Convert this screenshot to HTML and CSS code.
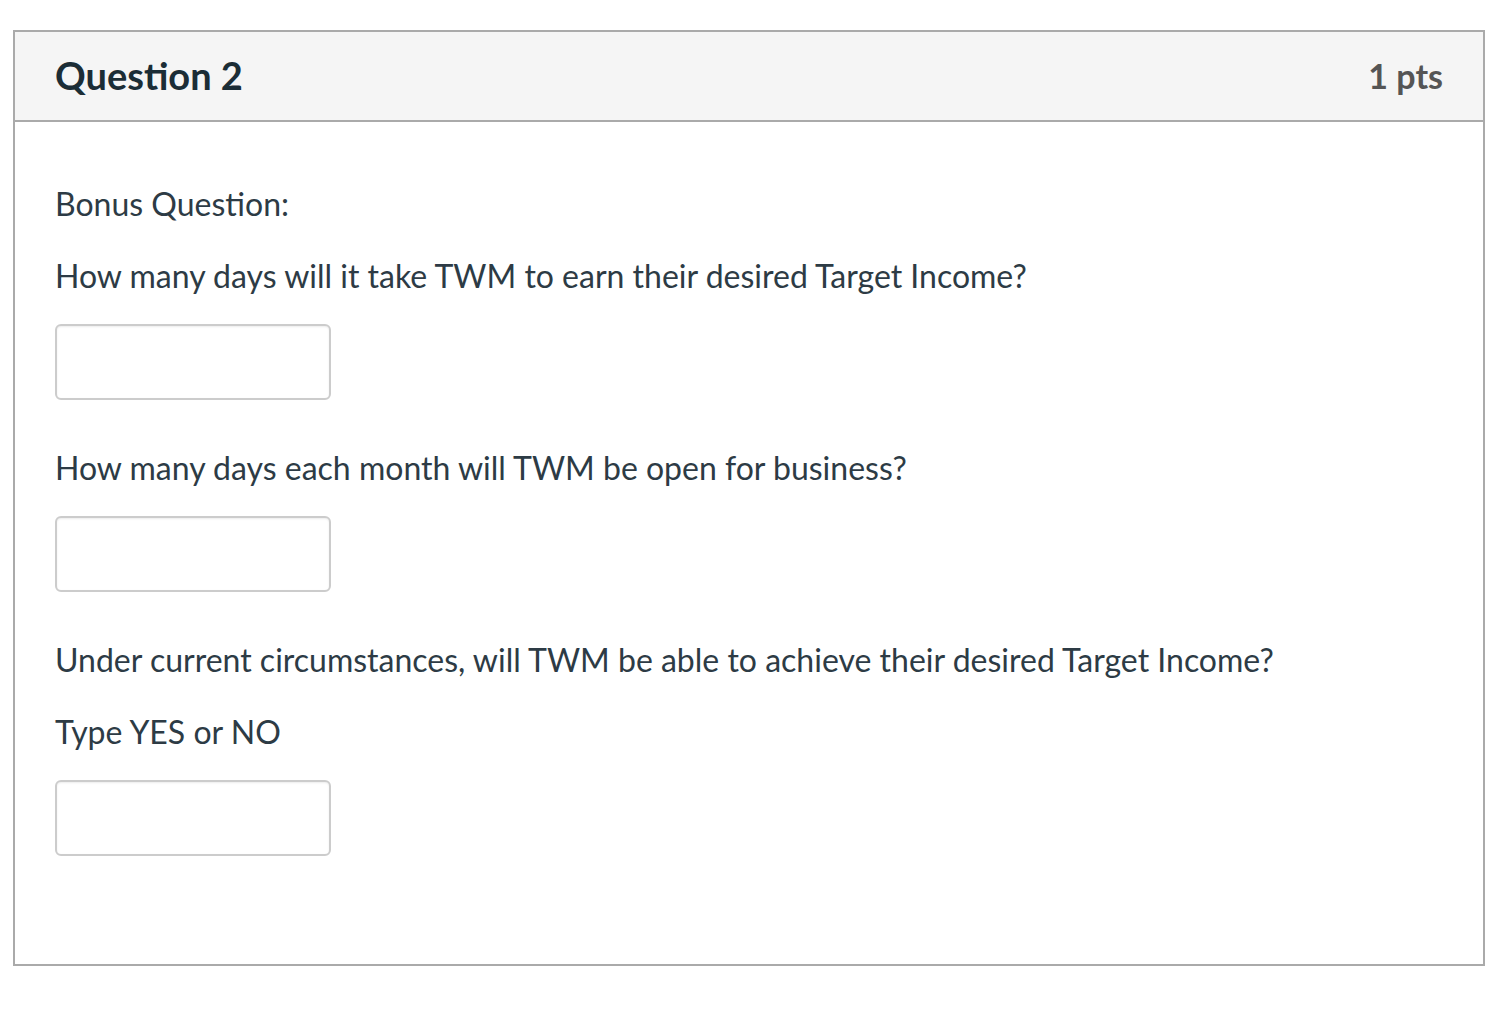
FILE: index.html
```html
<!DOCTYPE html>
<html>
<head>
<meta charset="utf-8">
<link rel="stylesheet" href="styles.css">
</head>
<body>
<div class="question">
  <div class="header">
    <h2 class="title">Question 2</h2>
    <div class="pts">1 pts</div>
  </div>
  <div class="content">
    <p class="line">Bonus Question:</p>
    <p class="line">How many days will it take TWM to earn their desired Target Income?</p>
    <input class="answer" type="text">
    <p class="line">How many days each month will TWM be open for business?</p>
    <input class="answer" type="text">
    <p class="line">Under current circumstances, will TWM be able to achieve their desired Target Income?</p>
    <p class="line">Type YES or NO</p>
    <input class="answer" type="text">
  </div>
</div>
</body>
</html>
```
FILE: styles.css
```css
html, body {
  margin: 0;
  padding: 0;
  background: #ffffff;
}
body {
  padding: 30px 23px 0 13px;
  font-family: Lato, "Noto Sans", sans-serif;
  color: #2d3b45;
}
.question {
  border: 2px solid #aaaaaa;
  width: 1472px;
  height: 936px;
  box-sizing: border-box;
  display: flex;
  flex-direction: column;
}
.header {
  background: #f5f5f5;
  border-bottom: 2px solid #aaaaaa;
  height: 90px;
  box-sizing: border-box;
  display: flex;
  align-items: center;
  justify-content: space-between;
  padding: 0 40px 2px 40px;
}
.title {
  margin: 0;
  font-size: 38px;
  font-weight: 700;
  color: #1b2d36;
}
.pts {
  font-size: 34px;
  font-weight: 700;
  color: #555555;
}
.content {
  padding: 64px 40px 0 40px;
  display: flex;
  flex-direction: column;
  align-items: flex-start;
}
.line {
  margin: 0;
  font-size: 32px;
  line-height: 36px;
}
.line + .line {
  margin-top: 36px;
}
.line + .answer {
  margin-top: 30px;
}
.answer {
  width: 276px;
  height: 76px;
  box-sizing: border-box;
  border: 2px solid #cccccc;
  border-radius: 6px;
  box-shadow: inset 0 1px 2px rgba(0,0,0,0.08);
  margin: 0 0 50px 0;
  background: #fff;
}
```
